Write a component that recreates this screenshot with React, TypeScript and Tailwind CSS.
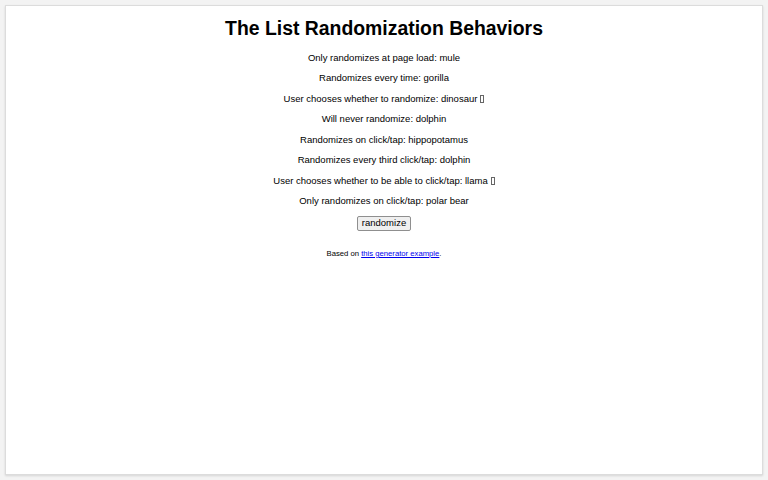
import { useState } from 'react';

const animals = ['mule', 'gorilla', 'dinosaur', 'dolphin', 'hippopotamus', 'llama', 'polar bear'];

const rows: { label: string; value: string; box?: boolean }[] = [
  { label: 'Only randomizes at page load', value: 'mule' },
  { label: 'Randomizes every time', value: 'gorilla' },
  { label: 'User chooses whether to randomize', value: 'dinosaur', box: true },
  { label: 'Will never randomize', value: 'dolphin' },
  { label: 'Randomizes on click/tap', value: 'hippopotamus' },
  { label: 'Randomizes every third click/tap', value: 'dolphin' },
  { label: 'User chooses whether to be able to click/tap', value: 'llama', box: true },
  { label: 'Only randomizes on click/tap', value: 'polar bear' },
];

// stand-in for the emoji toggle the font can't draw
function Tofu() {
  return <span className="inline-block w-[4px] h-[8px] ml-[3px] border border-[#666] align-[-1px]" />;
}

export default function App() {
  const [list, setList] = useState(rows);

  const shuffle = () => {
    setList((prev) =>
      prev.map((r, i) => (i === 4 ? { ...r, value: animals[Math.floor(Math.random() * animals.length)] } : r))
    );
  };

  return (
    <div className="w-[768px] h-[480px] bg-[#f3f3f3] p-[5px] font-['Liberation_Sans',Arial,sans-serif] text-black">
      <div className="h-full bg-white border border-[#dcdcdc] shadow-[0_1px_2px_rgba(0,0,0,0.12)] flex flex-col items-center pt-[10px]">
        <h1 className="text-[19.4px] leading-[24px] font-bold">The List Randomization Behaviors</h1>
        <div className="mt-[12px] flex flex-col items-center gap-[8.43px] text-[9.5px] leading-[12px]">
          {list.map((r) => (
            <p key={r.label}>
              {r.label}: {r.value}
              {r.box && <Tofu />}
            </p>
          ))}
        </div>
        <button
          onClick={shuffle}
          className="mt-[9px] px-[4px] h-[15px] text-[9.5px] leading-[12px] bg-[#efefef] border border-[#8f8f8f] rounded-[2px]"
        >
          randomize
        </button>
        <p className="mt-[18px] text-[7.7px] leading-[9px]">
          Based on{' '}
          <a href="#" className="text-[#0000ee] underline">
            this generator example
          </a>
          .
        </p>
      </div>
    </div>
  );
}
